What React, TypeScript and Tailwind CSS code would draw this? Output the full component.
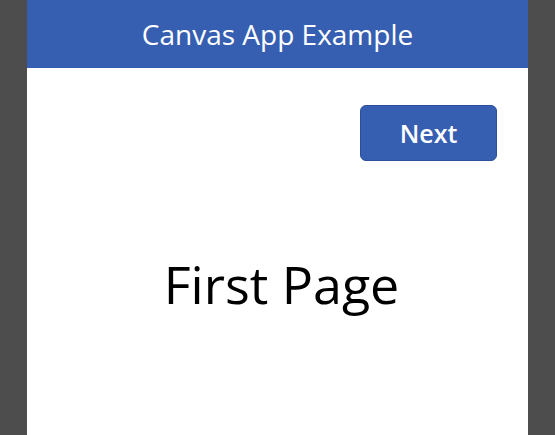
import React from "react";

export default function App() {
  return (
    <div className="w-[555px] h-[435px] bg-[#4d4d4d] flex justify-start" style={{ fontFamily: '"Open Sans", sans-serif' }}>
      <div className="ml-[27px] w-[501px] h-full bg-white flex flex-col">
        <div className="h-[68px] bg-[#375fb1] flex items-center justify-center text-white text-[28px] leading-none">
          Canvas App Example
        </div>
        <div className="flex justify-end pr-[31px] pt-[37px]">
          <button className="w-[137px] h-[56px] rounded-[6px] bg-[#375fb1] border border-[#2c4f9c] text-white text-[25px] font-semibold leading-none">
            Next
          </button>
        </div>
        <div className="flex justify-center pt-[97px] pl-[8px]">
          <span className="text-[52px] leading-none text-black">First Page</span>
        </div>
      </div>
    </div>
  );
}
